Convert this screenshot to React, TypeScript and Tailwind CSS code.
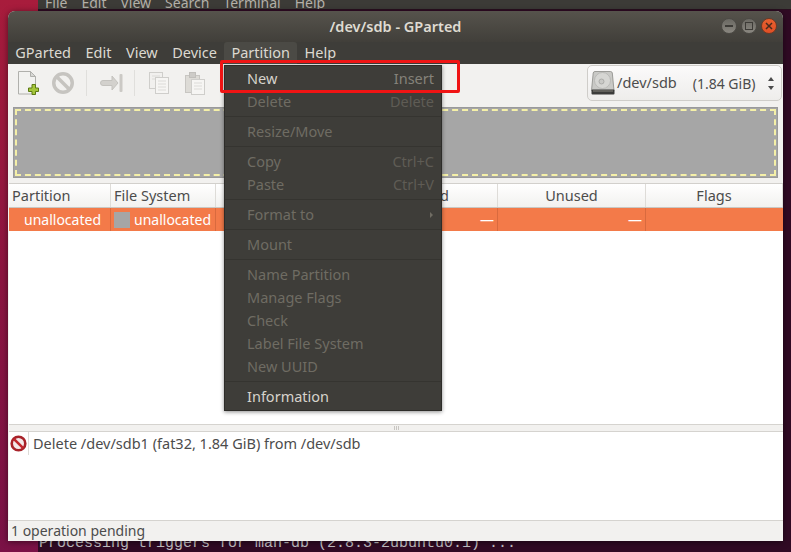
import { Fragment } from 'react'

const FONT = "font-['Noto_Sans',sans-serif]"

const MENU_BAR = ['GParted', 'Edit', 'View', 'Device', 'Partition', 'Help']

type MenuEntry = { label: string; key?: string; on?: boolean; arrow?: boolean }

const MENU_GROUPS: MenuEntry[][] = [
  [{ label: 'New', key: 'Insert', on: true }, { label: 'Delete', key: 'Delete' }],
  [{ label: 'Resize/Move' }],
  [{ label: 'Copy', key: 'Ctrl+C' }, { label: 'Paste', key: 'Ctrl+V' }],
  [{ label: 'Format to', arrow: true }],
  [{ label: 'Mount' }],
  [{ label: 'Name Partition' }, { label: 'Manage Flags' }, { label: 'Check' }, { label: 'Label File System' }, { label: 'New UUID' }],
  [{ label: 'Information', on: true }],
]

function NewIcon() {
  return (
    <svg width="21" height="24" viewBox="0 0 21 24" className="shrink-0">
      <path d="M0.500 0.500h12l5 5v17.500h-17z" fill="#f2f2f0" stroke="#b0b0ac" />
      <path d="M12.500 0.500v5h5z" fill="#d8d8d5" stroke="#b0b0ac" />
      <path d="M14 13.500h3.500v3.500h3v3.500h-3v3h-3.500v-3h-3.500v-3.500h3.500z" fill="#a5c63a" stroke="#5d7a14" />
    </svg>
  )
}

function UndoIcon() {
  return (
    <svg width="22" height="22" viewBox="0 0 22 22" className="shrink-0">
      <circle cx="11" cy="11" r="9.250" fill="none" stroke="#c6c4c0" strokeWidth="3.500" />
      <path d="M4.500 4.500l13 13" stroke="#c6c4c0" strokeWidth="3.500" />
    </svg>
  )
}

function ApplyIcon() {
  return (
    <svg width="23" height="20" viewBox="0 0 23 20" className="shrink-0">
      <path d="M3 7.500h9V3l6 7-6 7v-4.500H3a2.500 2.500 0 0 1 0-5z" fill="#d3d1cd" stroke="#c4c2be" />
      <rect x="19.500" y="1" width="3" height="18" rx="1" fill="#cbc9c5" />
    </svg>
  )
}

function CopyIcon() {
  return (
    <svg width="20" height="22" viewBox="0 0 20 22" className="shrink-0">
      <rect x="0.500" y="0.500" width="13" height="16" fill="#f1f0ee" stroke="#cfcecb" />
      <path d="M3 4h8M3 7h4" stroke="#dcdbd8" />
      <rect x="6.500" y="5.500" width="13" height="16" fill="#f6f5f3" stroke="#cfcecb" />
      <path d="M9 9h8M9 12h8M9 15h8M9 18h8" stroke="#dcdbd8" />
    </svg>
  )
}

function PasteIcon() {
  return (
    <svg width="20" height="23" viewBox="0 0 20 23" className="shrink-0">
      <rect x="0.500" y="3.500" width="14" height="17" fill="#dddbd6" stroke="#c8c6c2" />
      <rect x="4.500" y="0.500" width="6" height="5" fill="#cdcbc7" stroke="#c1bfbb" />
      <rect x="6.500" y="7.500" width="13" height="15" fill="#f6f5f3" stroke="#cfcecb" />
      <path d="M9 11h8M9 14h8M9 17h8" stroke="#dcdbd8" />
    </svg>
  )
}

function DiskIcon() {
  return (
    <svg width="24" height="24" viewBox="0 0 24 24" className="shrink-0">
      <path d="M4 0.500h15.500q1.500 0 1.800 1.500L23 19.500H0.500L2.200 2q.3-1.500 1.800-1.500z" fill="#c9c9c6" stroke="#8a8a87" strokeWidth="0.800" />
      <circle cx="11.500" cy="9.500" r="8" fill="#d6d6d3" stroke="#b0b0ad" strokeWidth="0.700" />
      <circle cx="10.500" cy="10.500" r="2.500" fill="#c9c9c6" stroke="#9e9e9b" strokeWidth="0.700" />
      <rect x="0.500" y="18.500" width="23" height="5" rx="1" fill="#3c3c3a" />
      <rect x="2" y="19.500" width="20" height="1" fill="#85837d" />
    </svg>
  )
}

function LogDeleteIcon() {
  return (
    <svg width="17" height="17" viewBox="0 0 17 17">
      <circle cx="8.500" cy="8.500" r="6.800" fill="#f4e9e9" stroke="#a8232a" strokeWidth="2.600" />
      <path d="M3.800 3.800l9.400 9.400" stroke="#c2272d" strokeWidth="2.600" />
    </svg>
  )
}

function PartitionMenu() {
  return (
    <div className="absolute left-[224px] top-[65px] w-[218px] h-[346px] bg-[#3e3d39] border border-[#2d2c29] shadow-[0_1px_4px_rgba(0,0,0,0.45)] pt-[1px] text-[14.500px] leading-[23px] z-20">
      {MENU_GROUPS.map((group, i) => (
        <Fragment key={i}>
          {i > 0 && <div className="h-[1px] my-[3px] bg-[#353430]" />}
          <div className="flex flex-col">
            {group.map(item => (
              <div key={item.label} className={`h-[23px] flex items-center justify-between pl-[22px] pr-[7px] ${item.on ? 'text-[#d6d3cc]' : 'text-[#6f6c63]'}`}>
                <span>{item.label}</span>
                {item.key && <span className={item.on ? 'text-[#85827a]' : 'text-[#5f5c55]'}>{item.key}</span>}
                {item.arrow && <span className="w-0 h-0 border-y-[3px] border-y-transparent border-l-[3px] border-l-[#6f6c63] mr-[1px]" />}
              </div>
            ))}
          </div>
        </Fragment>
      ))}
    </div>
  )
}

const COLUMNS = [
  { label: 'Partition', w: 'w-[102px]', left: true },
  { label: 'File System', w: 'w-[105px]', left: true },
  { label: 'Mount Point', w: 'w-[110px]' },
  { label: 'Size', w: 'w-[40px]' },
  { label: 'Used', w: 'w-[132px]' },
  { label: 'Unused', w: 'w-[148px]' },
  { label: 'Flags', w: 'flex-1' },
]

export default function App() {
  return (
    <div className={`relative w-[791px] h-[552px] overflow-hidden bg-[#300a24] ${FONT}`}>
      {/* desktop + terminal behind */}
      <div className="absolute left-0 top-0 w-[38px] h-full bg-gradient-to-b from-[#a81c3c] via-[#8c1540] to-[#7a1246]" />
      <div className="absolute left-[38px] top-0 right-0 h-[10px] bg-[#3c3b37] border-b border-[#2a1020] text-[#b3b0a8] text-[14px] leading-[6px] flex gap-[14px] pl-[7px] overflow-hidden">
        {['File', 'Edit', 'View', 'Search', 'Terminal', 'Help'].map(m => <span key={m}>{m}</span>)}
      </div>
      <div className="absolute left-[39px] top-[534px] text-[15px] leading-[19px] text-[#c4c0c4] whitespace-pre font-['Liberation_Mono',monospace]">
        Processing triggers for man-db (2.8.3-2ubuntu0.1) ...
      </div>

      {/* window */}
      <div className="absolute left-[8px] top-[11px] w-[775px] h-[530px] flex flex-col rounded-t-[7px] overflow-hidden bg-[#f2f1ef] shadow-[0_1px_6px_rgba(0,0,0,0.5)] text-[14px] text-[#4c4c4c]">
        {/* title bar */}
        <div className="h-[31px] shrink-0 relative flex items-center justify-center bg-gradient-to-b from-[#56534c] to-[#413f3a] text-[#dfdbd2] text-[14.500px] font-semibold">
          <span>/dev/sdb - GParted</span>
          <div className="absolute right-[6px] top-[7px] flex gap-[4px]">
            <div className="w-[16px] h-[16px] rounded-full bg-gradient-to-b from-[#6a6862] to-[#8a8780] border border-[#4d4b46] flex items-center justify-center">
              <div className="w-[8px] h-[1.500px] bg-[#3d3b37]" />
            </div>
            <div className="w-[16px] h-[16px] rounded-full bg-gradient-to-b from-[#6a6862] to-[#8a8780] border border-[#4d4b46] flex items-center justify-center">
              <div className="w-[8px] h-[8px] border border-[#3d3b37]" />
            </div>
            <div className="w-[16px] h-[16px] rounded-full bg-gradient-to-b from-[#e8602f] to-[#e04f26] border border-[#6d3a26] flex items-center justify-center">
              <svg width="8" height="8" viewBox="0 0 8 8">
                <path d="M1 1l6 6M7 1l-6 6" stroke="#4a2a1c" strokeWidth="1.500" />
              </svg>
            </div>
          </div>
        </div>

        {/* menu bar */}
        <div className="h-[22px] shrink-0 flex bg-[#3e3d39] text-[#dcd9d1] text-[14.500px]">
          {MENU_BAR.map(m => (
            <div key={m} className={`h-[22px] px-[7.250px] leading-[21px] rounded-t-[3px] ${m === 'Partition' ? 'bg-[#4b4a45]' : ''}`}>
              {m}
            </div>
          ))}
        </div>

        {/* toolbar */}
        <div className="h-[41px] shrink-0 flex items-center pl-[10px] pr-[1px] pb-[3px]">
          <NewIcon />
          <div className="ml-[13px]"><UndoIcon /></div>
          <div className="ml-[12px] w-[1px] h-[26px] bg-[#e0dfdc]" />
          <div className="ml-[13px]"><ApplyIcon /></div>
          <div className="ml-[11px] w-[1px] h-[26px] bg-[#e0dfdc]" />
          <div className="ml-[14px]"><CopyIcon /></div>
          <div className="ml-[16px]"><PasteIcon /></div>
          <div className="ml-auto w-[195px] h-[36px] rounded-[5px] border border-[#cfcdc9] bg-gradient-to-b from-[#fbfafa] to-[#eeedeb] flex items-center pl-[3px]">
            <DiskIcon />
            <span className="ml-[2px] text-[14.500px]">/dev/sdb</span>
            <span className="ml-[16px]">(1.84 GiB)</span>
            <div className="ml-auto mr-[7px] flex flex-col gap-[5px]">
              <span className="w-0 h-0 border-x-[3.500px] border-x-transparent border-b-[4px] border-b-[#4c4c4c]" />
              <span className="w-0 h-0 border-x-[3.500px] border-x-transparent border-t-[4px] border-t-[#4c4c4c]" />
            </div>
          </div>
        </div>

        {/* partition graph */}
        <div className="mx-[5px] mt-[2px] h-[71px] shrink-0 bg-[#a6a6a6] border border-[#9a9a9a] p-[1px]">
          <div className="w-full h-full border-[2px] border-dashed border-[#f5f0a8]" />
        </div>

        {/* table */}
        <div className="mt-[5px] flex-1 flex flex-col min-h-0 bg-white ml-[1px]">
          <div className="h-[25px] shrink-0 flex border-y border-t-[#d2d0cc] border-b-[#c9c7c3] bg-gradient-to-b from-white to-[#f2f1ef] text-[14.500px]">
            {COLUMNS.map(c => (
              <div key={c.label} className={`${c.w} border-r border-[#dedcd8] leading-[23px] whitespace-nowrap ${c.left ? 'pl-[3px]' : 'text-center'}`}>
                {c.label}
              </div>
            ))}
          </div>
          <div className="h-[23px] shrink-0 flex bg-[#f37a49] text-white leading-[23px]">
            <div className="w-[102px] border-r border-[#d96a3e] pl-[15px]">unallocated</div>
            <div className="w-[105px] border-r border-[#d96a3e] flex items-center pl-[3px]">
              <div className="w-[16px] h-[16px] bg-[#a6a6a6] mr-[4px]" />
              unallocated
            </div>
            <div className="w-[110px]" />
            <div className="w-[40px]" />
            <div className="w-[132px] border-r border-[#d96a3e] text-right pr-[3px]">—</div>
            <div className="w-[148px] border-r border-[#d96a3e] text-right pr-[3px]">—</div>
            <div className="flex-1" />
          </div>
        </div>

        {/* pane handle */}
        <div className="h-[8px] shrink-0 border-y border-[#d5d3cf] bg-[#f2f1ef] flex items-center justify-center gap-[1px] ml-[1px]">
          <div className="w-[1px] h-[4px] bg-[#c8c6c2]" />
          <div className="w-[1px] h-[4px] bg-[#c8c6c2]" />
          <div className="w-[1px] h-[4px] bg-[#c8c6c2]" />
        </div>

        {/* pending operations */}
        <div className="h-[88px] shrink-0 bg-white ml-[1px]">
          <div className="flex h-[23px] items-center">
            <div className="w-[20px] h-full flex items-center justify-center border-r border-[#dedcd8]">
              <LogDeleteIcon />
            </div>
            <span className="ml-[4px] text-[14.500px]">Delete /dev/sdb1 (fat32, 1.84 GiB) from /dev/sdb</span>
          </div>
        </div>

        {/* status bar */}
        <div className="h-[21px] shrink-0 border-t border-[#d5d3cf] pl-[3px] leading-[20px]">1 operation pending</div>
      </div>

      <PartitionMenu />

      {/* annotation */}
      <div className="absolute left-[220px] top-[60px] w-[240px] h-[33px] border-[3px] border-[#f01414] rounded-[2px] z-30" />
    </div>
  )
}
